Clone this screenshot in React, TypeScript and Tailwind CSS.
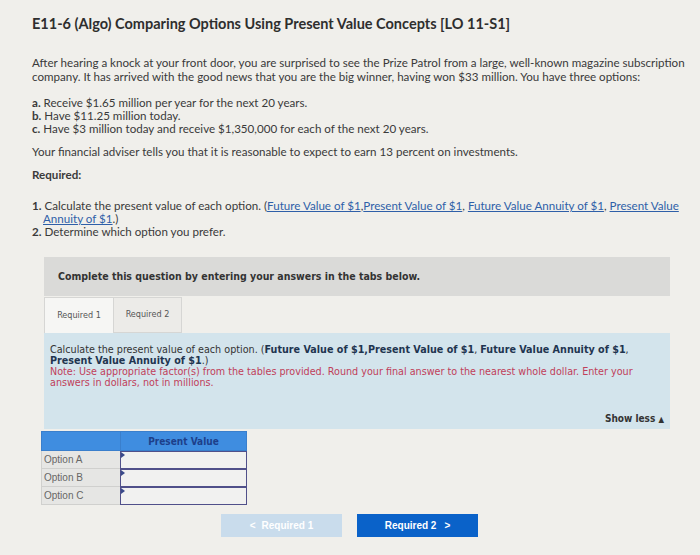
import React from "react";

const Link = ({ children }: { children: React.ReactNode }) => (
  <span className="text-[#2f5fa8] underline decoration-[#2f5fa8]">{children}</span>
);

export default function App() {
  return (
    <div className="w-[700px] h-[555px] overflow-hidden bg-[#f0efeb] text-[#3a3a3a] font-['Lato',sans-serif]">
      <div className="pl-[32px] pr-[8px] pt-[14px]">
        <h1 className="text-[14.5px] leading-[20px] font-bold text-[#2e2e2e]">
          E11-6 (Algo) Comparing Options Using Present Value Concepts [LO 11-S1]
        </h1>
        <p className="mt-[22px] text-[11.6px] leading-[14px]">
          After hearing a knock at your front door, you are surprised to see the Prize Patrol from a large, well-known magazine subscription company. It has arrived with the good news that you are the big winner, having won $33 million. You have three options:
        </p>
        <div className="mt-[12px] text-[11.6px] leading-[13px]">
          <div><b>a.</b> Receive $1.65 million per year for the next 20 years.</div>
          <div><b>b.</b> Have $11.25 million today.</div>
          <div><b>c.</b> Have $3 million today and receive $1,350,000 for each of the next 20 years.</div>
        </div>
        <p className="mt-[10px] text-[11.6px] leading-[14px]">
          Your financial adviser tells you that it is reasonable to expect to earn 13 percent on investments.
        </p>
        <p className="mt-[9px] text-[11.6px] leading-[14px] font-bold">Required:</p>
        <ol className="mt-[17px] text-[11.6px] leading-[13px]">
          <li className="pl-[11px] -indent-[11px]">
            <b>1.</b> Calculate the present value of each option. (<Link>Future Value of $1</Link>,<Link>Present Value of $1</Link>, <Link>Future Value Annuity of $1</Link>, <Link>Present Value Annuity of $1</Link>.)
          </li>
          <li><b>2.</b> Determine which option you prefer.</li>
        </ol>
      </div>

      <div className="ml-[44px] w-[626px] mt-[19px] font-['DejaVu_Sans_Condensed','DejaVu_Sans',sans-serif]">
        <div className="h-[39px] bg-[#dadad8] flex items-center pl-[14px] text-[10.5px] font-bold text-[#333]">
          Complete this question by entering your answers in the tabs below.
        </div>
        <div className="flex h-[36px] mt-[1px]">
          <div className="w-[70px] bg-[#f6f6f4] border border-[#d6d6d4] border-b-0 flex items-center justify-center text-[9px] text-[#555]">
            Required 1
          </div>
          <div className="w-[68px] bg-[#ecebe8] border border-l-0 border-[#d6d6d4] flex items-center justify-center text-[9px] text-[#555]">
            Required 2
          </div>
        </div>
        <div className="h-[96px] bg-[#d3e4ec] px-[6px] pt-[11px] relative text-[10.7px] leading-[11px]">
          <div className="text-[#333]">
            Calculate the present value of each option. (<b className="text-[#1f3550]">Future Value of $1,Present Value of $1</b>, <b className="text-[#1f3550]">Future Value Annuity of $1</b>, <b className="text-[#1f3550]">Present Value Annuity of $1</b>.)
          </div>
          <div className="text-[#c0405a]">
            Note: Use appropriate factor(s) from the tables provided. Round your final answer to the nearest whole dollar. Enter your answers in dollars, not in millions.
          </div>
          <div className="absolute right-[6px] bottom-[4px] text-[10px] font-bold text-[#333]">
            Show less <span className="text-[8px]">▲</span>
          </div>
        </div>
      </div>

      <div className="ml-[41px] mt-[2px] w-[206px] font-['Liberation_Sans',sans-serif] text-[10px]">
        <div className="flex h-[20px] bg-[#3f8de0] border border-[#3a7fcc]">
          <div className="w-[79px] border-r border-[#3a7fcc]"></div>
          <div className="flex-1 flex items-center justify-center font-bold text-[#1d3f8a] font-['DejaVu_Sans_Condensed','DejaVu_Sans',sans-serif]">
            Present Value
          </div>
        </div>
        {["Option A", "Option B", "Option C"].map((o) => (
          <div key={o} className="flex h-[18px] bg-[#e6e6e4]">
            <div className="w-[79px] flex items-center pl-[2px] text-[#666] border-b border-l border-[#d0d0ce]">{o}</div>
            <div className="flex-1 bg-[#f1f1f0] border-[1.5px] border-[#50508a] relative">
              <span className="absolute left-0 top-0 w-0 h-0 border-t-[3px] border-b-[3px] border-l-[4px] border-t-transparent border-b-transparent border-l-[#3a4a8a]"></span>
            </div>
          </div>
        ))}
      </div>

      <div className="flex ml-[221px] mt-[9px] gap-[15px] font-['Liberation_Sans',sans-serif] text-[10px] font-bold">
        <div className="w-[121px] h-[23px] bg-[#c9dcec] text-white flex items-center justify-center gap-[6px]">
          <span>&lt;</span><span>Required 1</span>
        </div>
        <div className="w-[121px] h-[23px] bg-[#0a62c9] text-white flex items-center justify-center gap-[8px]">
          <span>Required 2</span><span>&gt;</span>
        </div>
      </div>
    </div>
  );
}
